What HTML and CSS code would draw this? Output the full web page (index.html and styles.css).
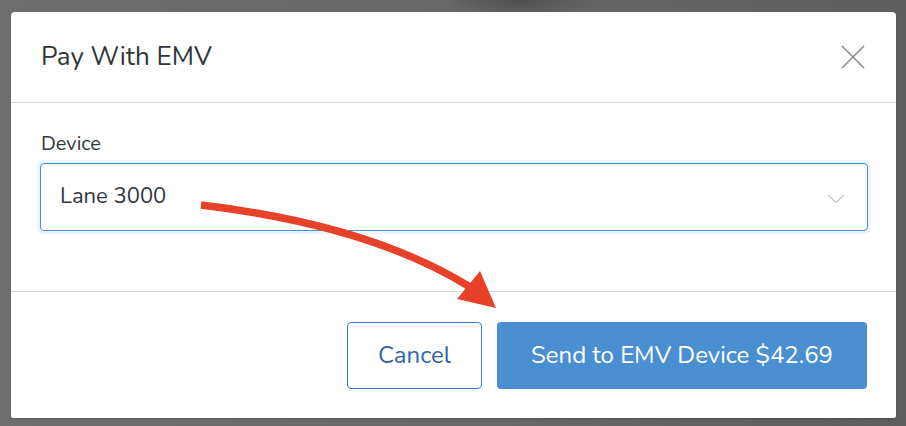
FILE: index.html
```html
<!DOCTYPE html>
<html>
<head>
<meta charset="utf-8">
<link rel="stylesheet" href="styles.css">
</head>
<body>
<div class="backdrop">
  <div class="modal">
    <div class="modal-header">
      <h1 class="modal-title">Pay With EMV</h1>
      <button class="close-btn" aria-label="Close">
        <svg width="24" height="24" viewBox="0 0 24 24"><path d="M1 1 L23 23 M23 1 L1 23" stroke="#8c8c8c" stroke-width="1.6" fill="none"/></svg>
      </button>
    </div>
    <div class="modal-body">
      <label class="field-label">Device</label>
      <div class="select-ring">
        <div class="select">
          <span class="select-value">Lane 3000</span>
          <svg class="chevron" width="18" height="10" viewBox="0 0 18 10"><path d="M1 1 L9 8.5 L17 1" stroke="#c4c4c4" stroke-width="1.2" fill="none"/></svg>
        </div>
      </div>
    </div>
    <div class="modal-footer">
      <button class="btn btn-outline">Cancel</button>
      <button class="btn btn-primary">Send to EMV Device $42.69</button>
    </div>
  </div>
  <svg class="arrow" width="906" height="426" viewBox="0 0 906 426">
    <path d="M201 205 Q 370 225 470 287" stroke="#e8412a" stroke-width="7.5" fill="none"/>
    <polygon points="457,299 480,271 496,308" fill="#e8412a"/>
  </svg>
</div>
</body>
</html>
```
FILE: styles.css
```css
* { box-sizing: border-box; }
html, body { margin: 0; padding: 0; }
body {
  width: 906px;
  height: 426px;
  overflow: hidden;
  font-family: "Nunito", "Lato", "Open Sans", sans-serif;
}
.backdrop {
  position: relative;
  width: 906px;
  height: 426px;
  padding: 12px 10px 8px 11px;
  background: radial-gradient(ellipse 80px 20px at 520px 0px, #505050, rgba(80,80,80,0)),
              linear-gradient(90deg, #6e6e6e, #686868 50%, #5e5e5e);
}
.modal {
  width: 885px;
  height: 406px;
  background: #fff;
  border-radius: 4px 4px 2px 2px;
  display: flex;
  flex-direction: column;
  box-shadow: 0 1px 2px rgba(0,0,0,0.2);
}
.modal-header {
  height: 91px;
  padding: 0 31px 0 30px;
  display: flex;
  align-items: center;
  justify-content: space-between;
  border-bottom: 1px solid #d6d6d6;
}
.modal-title {
  margin: 0;
  font-size: 26px;
  font-weight: 400;
  color: #2f363b;
  padding-bottom: 2px;
}
.close-btn {
  border: 0;
  background: none;
  padding: 0;
  width: 24px;
  height: 24px;
  display: flex;
}
.modal-body {
  height: 189px;
  padding: 28px 29px 0 30px;
  border-bottom: 1px solid #d6d6d6;
}
.field-label {
  display: block;
  font-size: 20px;
  color: #30373c;
  line-height: 26px;
  margin-bottom: 3px;
}
.select-ring {
  margin: 0 -4px;
  padding: 3px;
  border-radius: 7px;
  background: #ebf5fd;
}
.select {
  height: 68px;
  border: 1px solid #4a8fd6;
  border-radius: 4px;
  background: #fff;
  display: flex;
  align-items: center;
  justify-content: space-between;
  padding: 0 22px 0 19px;
}
.select-value {
  font-size: 22px;
  color: #2f363b;
  padding-bottom: 2px;
}
.chevron { margin-top: 4px; }
.modal-footer {
  flex: 1;
  display: flex;
  justify-content: flex-end;
  align-items: flex-start;
  gap: 15px;
  padding: 30px 29px 0 0;
}
.btn {
  height: 67px;
  border-radius: 4px;
  font-family: inherit;
  font-size: 24px;
  cursor: pointer;
  padding-bottom: 2px;
}
.btn-outline {
  width: 135px;
  background: #fff;
  border: 1px solid #3d7cc4;
  color: #2f66a8;
}
.btn-primary {
  width: 370px;
  background: #4a8fd2;
  border: 0;
  color: #fff;
}
.arrow {
  position: absolute;
  left: 0;
  top: 0;
  pointer-events: none;
}
```
